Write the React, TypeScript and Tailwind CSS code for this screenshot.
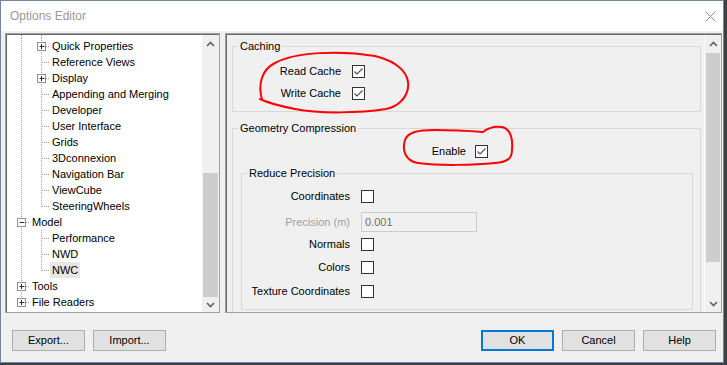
import React from 'react';

type TreeItem = {
  label: string;
  level: 0 | 1;
  exp?: '+' | '-';
  last?: boolean;
  selected?: boolean;
};

const treeItems: TreeItem[] = [
  { label: 'Quick Properties', level: 1, exp: '+' },
  { label: 'Reference Views', level: 1 },
  { label: 'Display', level: 1, exp: '+' },
  { label: 'Appending and Merging', level: 1 },
  { label: 'Developer', level: 1 },
  { label: 'User Interface', level: 1 },
  { label: 'Grids', level: 1 },
  { label: '3Dconnexion', level: 1 },
  { label: 'Navigation Bar', level: 1 },
  { label: 'ViewCube', level: 1 },
  { label: 'SteeringWheels', level: 1, last: true },
  { label: 'Model', level: 0, exp: '-' },
  { label: 'Performance', level: 1 },
  { label: 'NWD', level: 1 },
  { label: 'NWC', level: 1, last: true, selected: true },
  { label: 'Tools', level: 0, exp: '+' },
  { label: 'File Readers', level: 0, exp: '+', last: true },
];

const DOT = '#a0a0a0';

const Expander = ({ cx, sign }: { cx: number; sign: '+' | '-' }) => (
  <g>
    <rect x={cx - 4} y={4.5} width={8} height={8} fill="white" stroke="#919191" />
    <line x1={cx - 2} y1={8.5} x2={cx + 3} y2={8.5} stroke="#1e2f55" />
    {sign === '+' && <line x1={cx} y1={6} x2={cx} y2={11} stroke="#1e2f55" />}
  </g>
);

const TreeRow = ({ item }: { item: TreeItem }) => {
  const w = item.level === 0 ? 23 : 43;
  return (
    <div className="flex h-[16px] items-center">
      <svg width={w} height={16} className="shrink-0">
        {item.level === 1 ? (
          <>
            <line x1={14.5} y1={0} x2={14.5} y2={16} stroke={DOT} strokeDasharray="1 1" />
            <line x1={34.5} y1={0} x2={34.5} y2={item.last ? 9 : 16} stroke={DOT} strokeDasharray="1 1" />
            <line x1={item.exp ? 39 : 35} y1={8.5} x2={43} y2={8.5} stroke={DOT} strokeDasharray="1 1" />
            {item.exp && <Expander cx={34.5} sign={item.exp} />}
          </>
        ) : (
          <>
            <line x1={14.5} y1={0} x2={14.5} y2={item.last ? 9 : 16} stroke={DOT} strokeDasharray="1 1" />
            <line x1={19} y1={8.5} x2={23} y2={8.5} stroke={DOT} strokeDasharray="1 1" />
            {item.exp && <Expander cx={14.5} sign={item.exp} />}
          </>
        )}
      </svg>
      <span
        className={`px-[2px] leading-[16px] whitespace-nowrap text-black ${item.selected ? 'bg-[#e6e6e6]' : ''}`}
      >
        {item.label}
      </span>
    </div>
  );
};

const ChevronUp = () => (
  <svg width="9" height="6">
    <polyline points="1,5 4.5,1.5 8,5" fill="none" stroke="#606060" strokeWidth="1.6" />
  </svg>
);

const ChevronDown = () => (
  <svg width="9" height="6">
    <polyline points="1,1 4.5,4.5 8,1" fill="none" stroke="#606060" strokeWidth="1.6" />
  </svg>
);

const Check = ({ checked }: { checked?: boolean }) => (
  <div className="w-[13px] h-[13px] border border-[#333333] bg-white flex items-center justify-center shrink-0">
    {checked && (
      <svg width="11" height="11" viewBox="0 0 11 11">
        <polyline points="1.5,5.5 4,8 9.5,2.5" fill="none" stroke="#4d4d4d" strokeWidth="1.1" />
      </svg>
    )}
  </div>
);

const Button = ({ label, primary }: { label: string; primary?: boolean }) => (
  <button
    className={`w-[73px] h-[21px] bg-[#e1e1e1] text-black text-[11px] leading-none ${
      primary ? 'border-2 border-[#0078d7]' : 'border border-[#adadad]'
    }`}
  >
    {label}
  </button>
);

const OptionRow = ({
  label,
  labelWidth,
  checked,
  className = '',
}: {
  label: string;
  labelWidth: string;
  checked?: boolean;
  className?: string;
}) => (
  <div className={`flex h-[16px] items-center gap-[11px] ${className}`}>
    <span className={`${labelWidth} text-right whitespace-nowrap`}>{label}</span>
    <Check checked={checked} />
  </div>
);

export default function App() {
  return (
    <div className="relative w-[727px] h-[365px] bg-[#3b4048] overflow-hidden font-['Liberation_Sans',Arial,sans-serif] text-[11px] text-black">
      <div className="w-[724px] h-[363px] border border-[#7486a8] bg-[#f0f0f0] flex flex-col">
        {/* title bar */}
        <div className="h-[30px] bg-white flex items-center justify-between pl-[9px] pr-[6px] shrink-0">
          <span className="text-[12px] text-[#999999]">Options Editor</span>
          <svg width="11" height="11" className="mr-[1px]">
            <line x1="0.5" y1="0.5" x2="10.5" y2="10.5" stroke="#8c8c8c" />
            <line x1="10.5" y1="0.5" x2="0.5" y2="10.5" stroke="#8c8c8c" />
          </svg>
        </div>

        <div className="flex pt-[2px] pl-[4px] gap-[5px]">
          {/* tree */}
          <div className="w-[215px] h-[280px] border border-[#a0a0a0] shrink-0">
            <div className="h-full border-t border-l border-[#696969] flex bg-white">
              <div className="flex-1 overflow-hidden">
                <svg width="43" height="3" className="block">
                  <line x1={14.5} y1={0} x2={14.5} y2={3} stroke={DOT} strokeDasharray="1 1" />
                  <line x1={34.5} y1={0} x2={34.5} y2={3} stroke={DOT} strokeDasharray="1 1" />
                </svg>
                {treeItems.map((item) => (
                  <TreeRow key={item.label} item={item} />
                ))}
              </div>
              <div className="w-[17px] bg-[#f0f0f0] flex flex-col">
                <div className="h-[17px] flex items-center justify-center">
                  <ChevronUp />
                </div>
                <div className="flex-1 flex flex-col justify-end">
                  <div className="h-[124px] mx-[1px] bg-[#cdcdcd]" />
                </div>
                <div className="h-[15px] flex items-center justify-center">
                  <ChevronDown />
                </div>
              </div>
            </div>
          </div>

          {/* options panel */}
          <div className="w-[497px] h-[280px] border border-[#a0a0a0]">
            <div className="h-full border-t border-l border-[#696969] flex">
              <div className="flex-1 overflow-hidden pl-[5px] pt-[3px]">
                <fieldset className="w-[469px] border border-[#d9d9d9] pb-[10px]">
                  <legend className="ml-[5px] px-[2px] leading-[16px]">Caching</legend>
                  <OptionRow label="Read Cache" labelWidth="w-[108px]" checked className="mt-[9px]" />
                  <OptionRow label="Write Cache" labelWidth="w-[108px]" checked className="mt-[6px]" />
                </fieldset>

                <fieldset className="w-[469px] mt-[8px] border border-[#d9d9d9] pb-[10px]">
                  <legend className="ml-[5px] px-[2px] leading-[16px]">Geometry Compression</legend>
                  <div className="flex h-[16px] items-center gap-[9px] mt-[7px]">
                    <span className="w-[233px] text-right">Enable</span>
                    <Check checked />
                  </div>

                  <fieldset className="w-[452px] ml-[8px] mt-[6px] border border-[#d9d9d9] pb-[10px]">
                    <legend className="ml-[5px] px-[2px] leading-[16px]">Reduce Precision</legend>
                    <OptionRow label="Coordinates" labelWidth="w-[108px]" className="mt-[7px]" />
                    <div className="flex h-[20px] items-center gap-[11px] mt-[8px]">
                      <span className="w-[108px] text-right text-[#a0a0a0]">Precision (m)</span>
                      <div className="w-[116px] h-[20px] border border-[#cccccc] bg-[#f0f0f0] flex items-center pl-[3px] text-[#6d6d6d]">
                        0.001
                      </div>
                    </div>
                    <OptionRow label="Normals" labelWidth="w-[108px]" className="mt-[4px]" />
                    <OptionRow label="Colors" labelWidth="w-[108px]" className="mt-[7px]" />
                    <OptionRow label="Texture Coordinates" labelWidth="w-[108px]" className="mt-[8px]" />
                  </fieldset>
                </fieldset>
              </div>
              <div className="w-[17px] border-l border-[#fafafa] flex flex-col">
                <div className="h-[17px] flex items-center justify-center">
                  <ChevronUp />
                </div>
                <div className="flex-1 pt-[1px]">
                  <div className="h-[209px] mx-[1px] bg-[#cdcdcd]" />
                </div>
                <div className="h-[17px] flex items-center justify-center">
                  <ChevronDown />
                </div>
              </div>
            </div>
          </div>
        </div>

        {/* buttons */}
        <div className="flex mt-[17px] pl-[11px] pr-[7px]">
          <div className="flex gap-[8px]">
            <Button label="Export..." />
            <Button label="Import..." />
          </div>
          <div className="flex gap-[8px] ml-auto">
            <Button label="OK" primary />
            <Button label="Cancel" />
            <Button label="Help" />
          </div>
        </div>
      </div>

      {/* red hand-drawn annotations */}
      <svg className="absolute inset-0 pointer-events-none" width="727" height="365">
        <path
          d="M 262 100 C 258 85, 261 70, 275 63 C 295 52, 340 50, 375 56 C 400 62, 410 75, 408 88 C 406 100, 396 107, 386 109 C 360 113, 320 114, 295 109 C 280 106, 268 103, 260 99"
          fill="none"
          stroke="#ff0000"
          strokeWidth="2"
          strokeLinecap="round"
        />
        <path
          d="M 483 132 C 488 128, 495 126, 502 127 C 510 129, 513 138, 512 150 C 512 158, 508 162, 495 163 C 475 165, 440 166, 418 163 C 405 161, 402 150, 405 140 C 408 132, 418 130, 435 130 C 455 130, 470 131, 483 132"
          fill="none"
          stroke="#ff0000"
          strokeWidth="2"
          strokeLinecap="round"
        />
      </svg>
    </div>
  );
}
